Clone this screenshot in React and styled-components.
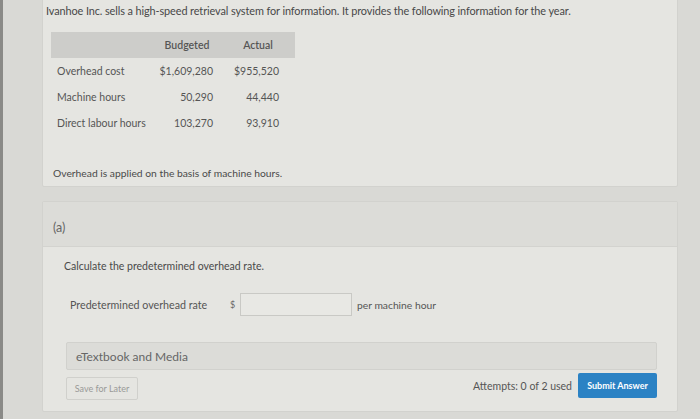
import React from 'react';
import styled, { createGlobalStyle } from 'styled-components';

const GlobalStyle = createGlobalStyle`
  html, body {
    margin: 0;
    background: #d9d9d5;
    font-family: Lato, "Open Sans", sans-serif;
    color: #505050;
  }
`;

const Page = styled.div`
  // display
  display: flex;
  flex-direction: column;
  gap: 14px;
  // box
  width: 700px;
  height: 419px;
  box-sizing: border-box;
  border-left: 3px solid #8a8a87;
  padding: 0 22px 0 39px;
  overflow: hidden;
`;

const Card = styled.div`
  background: #e5e5e1;
  border: 1px solid #d2d2ce;
  border-radius: 2px;
  box-sizing: border-box;
`;

const InfoCard = styled(Card)`
  margin-top: -2px;
  height: 189px;
  padding: 5px 3px 0;
`;

const Intro = styled.div`
  font-size: 10.9px;
  color: #484848;
  letter-spacing: -0.1px;
  white-space: nowrap;
`;

const Table = styled.table`
  border-collapse: collapse;
  margin: 15px 0 0 5px;
  font-size: 10.5px;
  color: #555;
`;

const HeadCell = styled.th`
  background: #cdcdca;
  height: 26px;
  padding: 0;
  font-weight: 600;
  text-align: center;
  width: ${p => p.w}px;
`;

const LabelCell = styled.td`
  height: 26px;
  padding: 0 0 0 6px;
  white-space: nowrap;
`;

const NumCell = styled.td`
  text-align: right;
  padding-right: ${p => p.pr}px;
`;

const Note = styled.div`
  margin: 31px 0 0 7px;
  font-size: 10.3px;
  color: #4a4a4a;
`;

const QuestionCard = styled(Card)`
  display: flex;
  flex-direction: column;
  height: 211px;
`;

const PartHead = styled.div`
  height: 45px;
  box-sizing: border-box;
  display: flex;
  align-items: center;
  padding: 6px 0 0 10px;
  background: #dcdcd8;
  border-bottom: 1px solid #d3d3cf;
  font-size: 12.5px;
  color: #666;
`;

const PartBody = styled.div`
  flex: 1;
  display: flex;
  flex-direction: column;
  padding: 13px 20px 0 23px;
`;

const Prompt = styled.div`
  font-size: 10.5px;
  color: #4a4a4a;
  margin-left: -2px;
`;

const AnswerRow = styled.div`
  display: flex;
  align-items: center;
  margin: 21px 0 0 4px;
  font-size: 10.7px;
  color: #555;
`;

const AnswerLabel = styled.span`
  width: 160px;
`;

const Dollar = styled.span`
  width: 10px;
  font-size: 9px;
  color: #666;
`;

const Input = styled.div`
  width: 110px;
  height: 21px;
  border: 1px solid #c9c9c5;
  background: #e8e8e4;
  margin-right: 5px;
`;

const Unit = styled.span`
  font-size: 10.3px;
`;

const MediaBar = styled.div`
  margin-top: 26px;
  height: 26px;
  display: flex;
  align-items: center;
  padding-left: 9px;
  background: #dcdcd8;
  border: 1px solid #d1d1cd;
  border-radius: 2px;
  font-size: 12px;
  color: #666;
`;

const Footer = styled.div`
  display: flex;
  align-items: flex-start;
  margin-top: 3px;
`;

const SaveButton = styled.div`
  width: 72px;
  height: 23px;
  margin-top: 4px;
  box-sizing: border-box;
  display: flex;
  align-items: center;
  justify-content: center;
  border: 1px solid #d0d0cc;
  border-radius: 2px;
  font-size: 9px;
  color: #9a9a98;
`;

const Attempts = styled.span`
  margin: 7px 6px 0 auto;
  font-size: 10.5px;
  color: #555;
`;

const SubmitButton = styled.div`
  width: 79px;
  height: 25px;
  display: flex;
  align-items: center;
  justify-content: center;
  background: #2b82c4;
  border-radius: 2px;
  color: #fff;
  font-size: 9px;
  font-weight: 700;
`;

const rows = [
  ['Overhead cost', '$1,609,280', '$955,520'],
  ['Machine hours', '50,290', '44,440'],
  ['Direct labour hours', '103,270', '93,910'],
];

export default function App() {
  return (
    <>
      <GlobalStyle />
      <Page>
        <InfoCard>
          <Intro>
            Ivanhoe Inc. sells a high-speed retrieval system for information. It provides the following information for the year.
          </Intro>
          <Table>
            <thead>
              <tr>
                <HeadCell w={102}></HeadCell>
                <HeadCell w={68}>Budgeted</HeadCell>
                <HeadCell w={74}>Actual</HeadCell>
              </tr>
            </thead>
            <tbody>
              {rows.map(([label, budget, actual]) => (
                <tr key={label}>
                  <LabelCell>{label}</LabelCell>
                  <NumCell pr={8}>{budget}</NumCell>
                  <NumCell pr={16}>{actual}</NumCell>
                </tr>
              ))}
            </tbody>
          </Table>
          <Note>Overhead is applied on the basis of machine hours.</Note>
        </InfoCard>

        <QuestionCard>
          <PartHead>(a)</PartHead>
          <PartBody>
            <Prompt>Calculate the predetermined overhead rate.</Prompt>
            <AnswerRow>
              <AnswerLabel>Predetermined overhead rate</AnswerLabel>
              <Dollar>$</Dollar>
              <Input />
              <Unit>per machine hour</Unit>
            </AnswerRow>
            <MediaBar>eTextbook and Media</MediaBar>
            <Footer>
              <SaveButton>Save for Later</SaveButton>
              <Attempts>Attempts: 0 of 2 used</Attempts>
              <SubmitButton>Submit Answer</SubmitButton>
            </Footer>
          </PartBody>
        </QuestionCard>
      </Page>
    </>
  );
}
